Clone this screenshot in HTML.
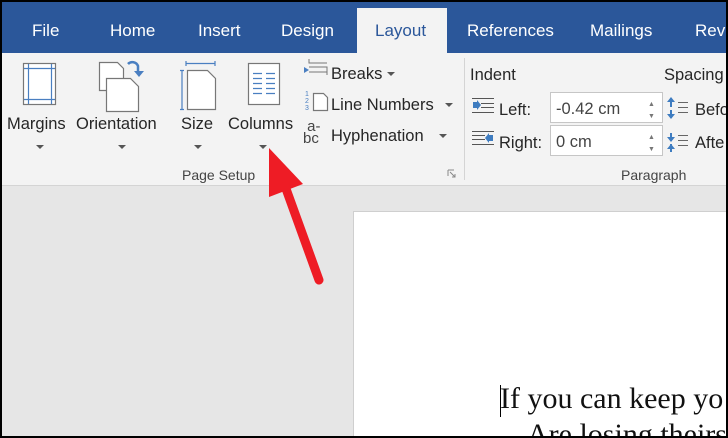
<!DOCTYPE html>
<html><head><style>
*{margin:0;padding:0;box-sizing:border-box}
html,body{width:728px;height:438px;overflow:hidden}
body{font-family:"Liberation Sans",sans-serif}
#w{position:relative;width:728px;height:438px;overflow:hidden;background:#e6e6e6}
.a{position:absolute;white-space:nowrap}
.tab{position:absolute;top:21px;color:#fff;font-size:17px}
.lbl{font-size:16.5px;color:#262626;margin-top:2px}
.dd{position:absolute;width:0;height:0;border-left:4px solid transparent;border-right:4px solid transparent;border-top:4px solid #555}
</style></head><body><div id="w">
<div class="a" style="left:0;top:0;width:728px;height:53px;background:#2b579a"></div>
<div class="tab" style="left:32px">File</div>
<div class="tab" style="left:110px">Home</div>
<div class="tab" style="left:198px">Insert</div>
<div class="tab" style="left:281px">Design</div>
<div class="a" style="left:357px;top:8px;width:90px;height:46px;background:#f3f3f3"></div>
<div class="tab" style="left:375px;color:#2b579a">Layout</div>
<div class="tab" style="left:467px">References</div>
<div class="tab" style="left:590px">Mailings</div>
<div class="tab" style="left:695px">Revi</div>
<div class="a" style="left:0;top:53px;width:728px;height:133px;background:#f3f3f3;border-bottom:1px solid #d4d4d4"></div>
<svg class="a" style="left:0;top:55px" width="470" height="60">
<g fill="#fff" stroke="#777" stroke-width="1.2">
<rect x="23.5" y="8.5" width="32" height="41"/>
<path d="M99.5 7.5h18l6 6v22h-24z"/><path d="M106.5 23.5h24l8 8v25h-32z"/>
<path d="M187.5 15.5h20l8 8v31h-28z"/>
<rect x="248.5" y="8.5" width="31" height="41"/>
<path d="M313.5 38.5h10l4 4v13h-14z"/>
</g>
<g stroke="#4a7fc1" stroke-width="1.2" fill="none">
<path d="M28.5 9v40M51.5 9v40M24 13.5h31M24 44.5h31"/>
<path d="M186 8.5h29M186 6v5M215 6v5"/><path d="M182 15v40M180 15.5h4M180 54.5h4"/>
<path d="M253 18.5h9M253 23.5h9M253 28.5h9M253 33.5h9M253 38.5h9M266 18.5h9M266 23.5h9M266 28.5h9M266 33.5h9M266 38.5h9"/>
<path d="M128 9a6 6 0 0 1 10 2v6" stroke-width="2.5"/>
</g>
<path d="M134 16l5 6 5-6z" fill="#4a7fc1"/>
<path d="M309 4v4h18M309 12h18v8M309 17h18" stroke="#777" fill="none"/>
<path d="M304 12l5 3-5 3z" fill="#4a7fc1"/>
</svg>
<div class="a" style="left:305px;top:91px;font-size:7px;color:#4a7fc1;line-height:7px">1<br>2<br>3</div>
<div class="a" style="left:303px;top:121px;font-size:15px;color:#444;line-height:12px">&nbsp;a-<br>bc</div>
<div class="a lbl" style="left:7px;top:113px">Margins</div>
<div class="a lbl" style="left:76px;top:113px">Orientation</div>
<div class="a lbl" style="left:181px;top:113px">Size</div>
<div class="a lbl" style="left:228px;top:113px">Columns</div>
<div class="dd" style="left:36px;top:145px"></div>
<div class="dd" style="left:118px;top:145px"></div>
<div class="dd" style="left:194px;top:145px"></div>
<div class="dd" style="left:259px;top:145px"></div>
<div class="a lbl" style="left:331px;top:63px">Breaks</div><div class="dd" style="left:387px;top:72px"></div>
<div class="a lbl" style="left:331px;top:94px">Line Numbers</div><div class="dd" style="left:445px;top:103px"></div>
<div class="a lbl" style="left:331px;top:125px">Hyphenation</div><div class="dd" style="left:439px;top:134px"></div>
<div class="a" style="left:182px;top:167px;font-size:14px;color:#444">Page Setup</div>
<svg class="a" style="left:447px;top:169px" width="10" height="10"><path d="M1 1h6M1 1v6M3 3l5 5M5 8h3V5" stroke="#888" fill="none"/></svg>
<div class="a" style="left:464px;top:58px;width:1px;height:122px;background:#d4d4d4"></div>
<div class="a lbl" style="left:470px;top:64px">Indent</div>
<div class="a lbl" style="left:664px;top:64px">Spacing</div>
<svg class="a" style="left:472px;top:97px" width="26" height="56"><g stroke="#555"><path d="M0 1.5h22M9 6.5h13M9 10.5h13M0 15.5h22M0 34.5h22M0 38.5h13M0 42.5h13M0 47.5h22"/></g><path d="M1 5h4v-2l4 5-4 5v-2H1z" fill="#3e7cc0"/><path d="M21 38h-4v-2l-4 5 4 5v-2h4z" fill="#3e7cc0"/></svg>
<div class="a lbl" style="left:499px;top:99px">Left:</div>
<div class="a lbl" style="left:499px;top:132px">Right:</div>
<div class="a" style="left:550px;top:92px;width:113px;height:31px;background:#fff;border:1px solid #c6c6c6;font-size:16.5px;color:#444;padding:7px 0 0 5px">-0.42 cm</div>
<div class="a" style="left:550px;top:125px;width:113px;height:31px;background:#fff;border:1px solid #c6c6c6;font-size:16.5px;color:#444;padding:7px 0 0 5px">0 cm</div>
<div class="a" style="left:648px;top:99px;font-size:7px;color:#777;line-height:12px">▲<br>▼</div>
<div class="a" style="left:648px;top:132px;font-size:7px;color:#777;line-height:12px">▲<br>▼</div>
<svg class="a" style="left:666px;top:97px" width="26" height="56"><g stroke="#3e7cc0" stroke-width="2"><path d="M5 2v8M5 13v8M5 36v8M5 47v8"/></g><g fill="#3e7cc0"><path d="M1 5l4-5 4 5zM1 17l4 5 4-5zM1 40l4 5 4-5zM1 52l4-5 4 5z"/></g><g stroke="#666"><path d="M12 5.5h10M12 10.5h10M12 15.5h10M12 38.5h10M12 43.5h10M12 48.5h10"/></g></svg>
<div class="a lbl" style="left:695px;top:99px">Befo</div>
<div class="a lbl" style="left:695px;top:132px">Afte</div>
<div class="a" style="left:621px;top:167px;font-size:14px;color:#444">Paragraph</div>
<div class="a" style="left:353px;top:211px;width:380px;height:240px;background:#fff;border:1px solid #cfcfcf"></div>
<div class="a" style="left:500px;top:385px;width:1px;height:32px;background:#000"></div>
<div class="a" style="left:500px;top:382px;font-family:'Liberation Serif',serif;font-size:30px;color:#111">If you can keep yo</div>
<div class="a" style="left:527px;top:418px;font-family:'Liberation Serif',serif;font-size:30px;color:#111">Are losing theirs</div>
<svg class="a" style="left:0;top:0" width="728" height="438"><path d="M269 148L269 197L303 184Z" fill="#ee1c25"/><path d="M285 186L319 280" stroke="#ee1c25" stroke-width="9" stroke-linecap="round"/></svg>
<div class="a" style="left:0;top:0;width:728px;height:438px;border:2px solid #000"></div>
</div></body></html>
